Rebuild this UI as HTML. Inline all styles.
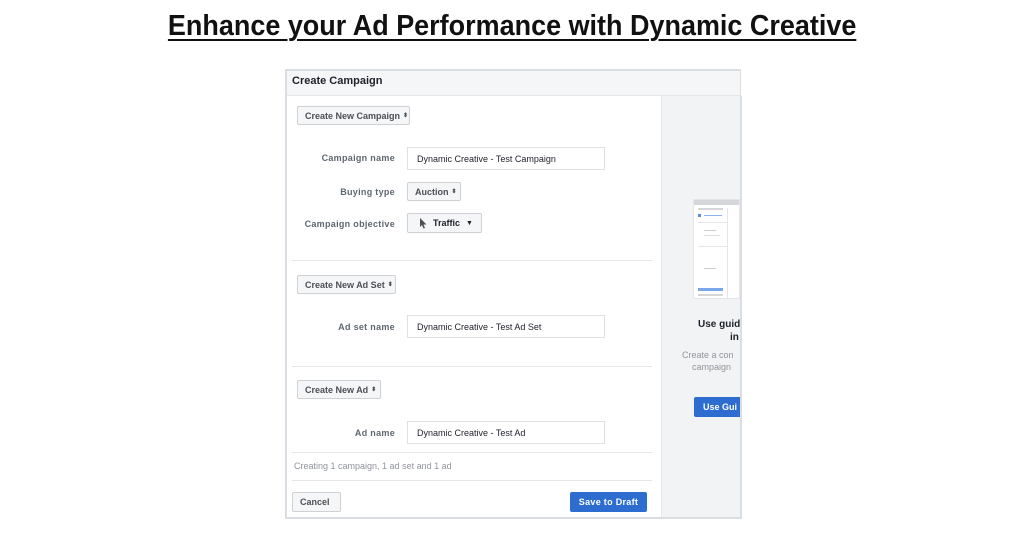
<!DOCTYPE html>
<html><head><style>
*{margin:0;padding:0;box-sizing:border-box}
body{width:1024px;height:536px;background:#fff;font-family:"Liberation Sans",Arial,sans-serif;position:relative;overflow:hidden;color:#1d2129}
.a{position:absolute}
.t{left:0;width:1024px;top:10px;text-align:center}
.t span{display:inline-block;font-weight:bold;font-size:29px;transform:scaleX(0.93);text-decoration:underline;text-decoration-thickness:2px;text-underline-offset:4px;color:#111;white-space:nowrap}
.btn{background:#f5f6f7;border:1px solid #ced0d4;border-radius:2px;font-size:9px;font-weight:bold;color:#4b4f56;display:flex;align-items:center;padding-left:7px;white-space:nowrap}
.btn i{font-style:normal;font-size:6px;margin-left:3px}
.lbl{font-size:9px;color:#606770;text-align:right;width:150px;left:245px;font-weight:bold;letter-spacing:0.3px}
.inp{left:407px;width:198px;height:23px;border:1px solid #dddfe2;background:#fff;font-size:9px;color:#1d2129;padding-left:9px;display:flex;align-items:center}
.hr{left:292px;width:360px;height:1px;background:#e5e6e9}
</style></head><body>
<div class="a t"><span>Enhance your Ad Performance with Dynamic Creative</span></div>
<div class="a" style="left:285px;top:69px;width:456px;height:450px;border:2px solid #dadde1;background:#fff"></div>
<div class="a" style="left:287px;top:71px;width:453px;height:25px;background:#f5f6f7;border-bottom:1px solid #e5e6e9;font-size:11px;font-weight:bold;color:#1d2129;padding:4px 0 0 5px">Create Campaign</div>
<div class="a" style="left:661px;top:96px;width:79px;height:421px;background:#f2f3f5;border-left:1px solid #e5e6e9"></div>
<div class="a btn" style="left:297px;top:106px;width:113px;height:19px">Create New Campaign<i>⬍</i></div>
<div class="a lbl" style="top:153px">Campaign name</div>
<div class="a inp" style="top:147px">Dynamic Creative - Test Campaign</div>
<div class="a lbl" style="top:187px">Buying type</div>
<div class="a btn" style="left:407px;top:182px;width:54px;height:19px">Auction<i>⬍</i></div>
<div class="a lbl" style="top:219px">Campaign objective</div>
<div class="a btn" style="left:407px;top:213px;width:75px;height:20px;padding-left:11px;color:#1d2129"><svg width="8" height="11" viewBox="0 0 8 11" style="margin-right:6px"><path d="M1 0 L1 9 L3 7 L4.5 10.5 L6 10 L4.5 6.5 L7.5 6.5 Z" fill="#4b4f56"/></svg>Traffic <span style="margin-left:6px;font-size:7px">▼</span></div>
<div class="a hr" style="top:260px"></div>
<div class="a btn" style="left:297px;top:275px;width:99px;height:19px">Create New Ad Set<i>⬍</i></div>
<div class="a lbl" style="top:322px">Ad set name</div>
<div class="a inp" style="top:315px">Dynamic Creative - Test Ad Set</div>
<div class="a hr" style="top:366px"></div>
<div class="a btn" style="left:297px;top:380px;width:84px;height:19px">Create New Ad<i>⬍</i></div>
<div class="a lbl" style="top:428px">Ad name</div>
<div class="a inp" style="top:421px">Dynamic Creative - Test Ad</div>
<div class="a hr" style="top:452px"></div>
<div class="a" style="left:294px;top:461px;font-size:9px;color:#90949c">Creating 1 campaign, 1 ad set and 1 ad</div>
<div class="a hr" style="top:480px"></div>
<div class="a btn" style="left:292px;top:492px;width:49px;height:20px;color:#4b4f56">Cancel</div>
<div class="a" style="left:570px;top:492px;width:77px;height:20px;background:#2d6dd0;border-radius:2px;color:#fff;font-size:9px;font-weight:bold;text-align:center;line-height:20px;letter-spacing:0.3px">Save to Draft</div>
<div class="a" style="left:693px;top:199px;width:47px;height:100px;background:#fff;border:1px solid #e3e5e8;overflow:hidden">
 <div style="height:5px;background:#d4d6da"></div>
 <div class="a" style="left:33px;top:8px;width:1px;height:92px;background:#e3e5e8"></div>
 <div class="a" style="left:4px;top:8px;width:25px;height:2px;background:#d4d6da"></div>
 <div class="a" style="left:4px;top:14px;width:3px;height:3px;background:#5b8ee0"></div>
 <div class="a" style="left:10px;top:15px;width:18px;height:1px;background:#8fb3eb"></div>
 <div class="a" style="left:4px;top:22px;width:29px;height:1px;background:#e3e5e8"></div>
 <div class="a" style="left:10px;top:30px;width:12px;height:1px;background:#ccc"></div>
 <div class="a" style="left:10px;top:35px;width:16px;height:1px;background:#ddd"></div>
 <div class="a" style="left:4px;top:46px;width:29px;height:1px;background:#e3e5e8"></div>
 <div class="a" style="left:10px;top:68px;width:12px;height:1px;background:#ccc"></div>
 <div class="a" style="left:4px;top:88px;width:25px;height:3px;background:#7aa7ea"></div>
 <div class="a" style="left:4px;top:94px;width:25px;height:2px;background:#d4d6da"></div>
</div>
<div class="a" style="left:698px;top:319px;font-size:10px;font-weight:bold;color:#1d2129;white-space:nowrap">Use guid</div>
<div class="a" style="left:730px;top:332px;font-size:10px;font-weight:bold;color:#1d2129">in</div>
<div class="a" style="left:682px;top:350px;font-size:9px;color:#90949c;white-space:nowrap">Create a con</div>
<div class="a" style="left:692px;top:362px;font-size:9px;color:#90949c;white-space:nowrap">campaign</div>
<div class="a" style="left:694px;top:397px;width:50px;height:20px;background:#2d6dd0;border-radius:2px;color:#fff;font-size:9px;font-weight:bold;line-height:20px;padding-left:9px;white-space:nowrap">Use Gui</div>
<div class="a" style="left:740px;top:96px;width:2px;height:423px;background:#dadde1"></div>
<div class="a" style="left:742px;top:60px;width:40px;height:470px;background:#fff"></div>
</body></html>
